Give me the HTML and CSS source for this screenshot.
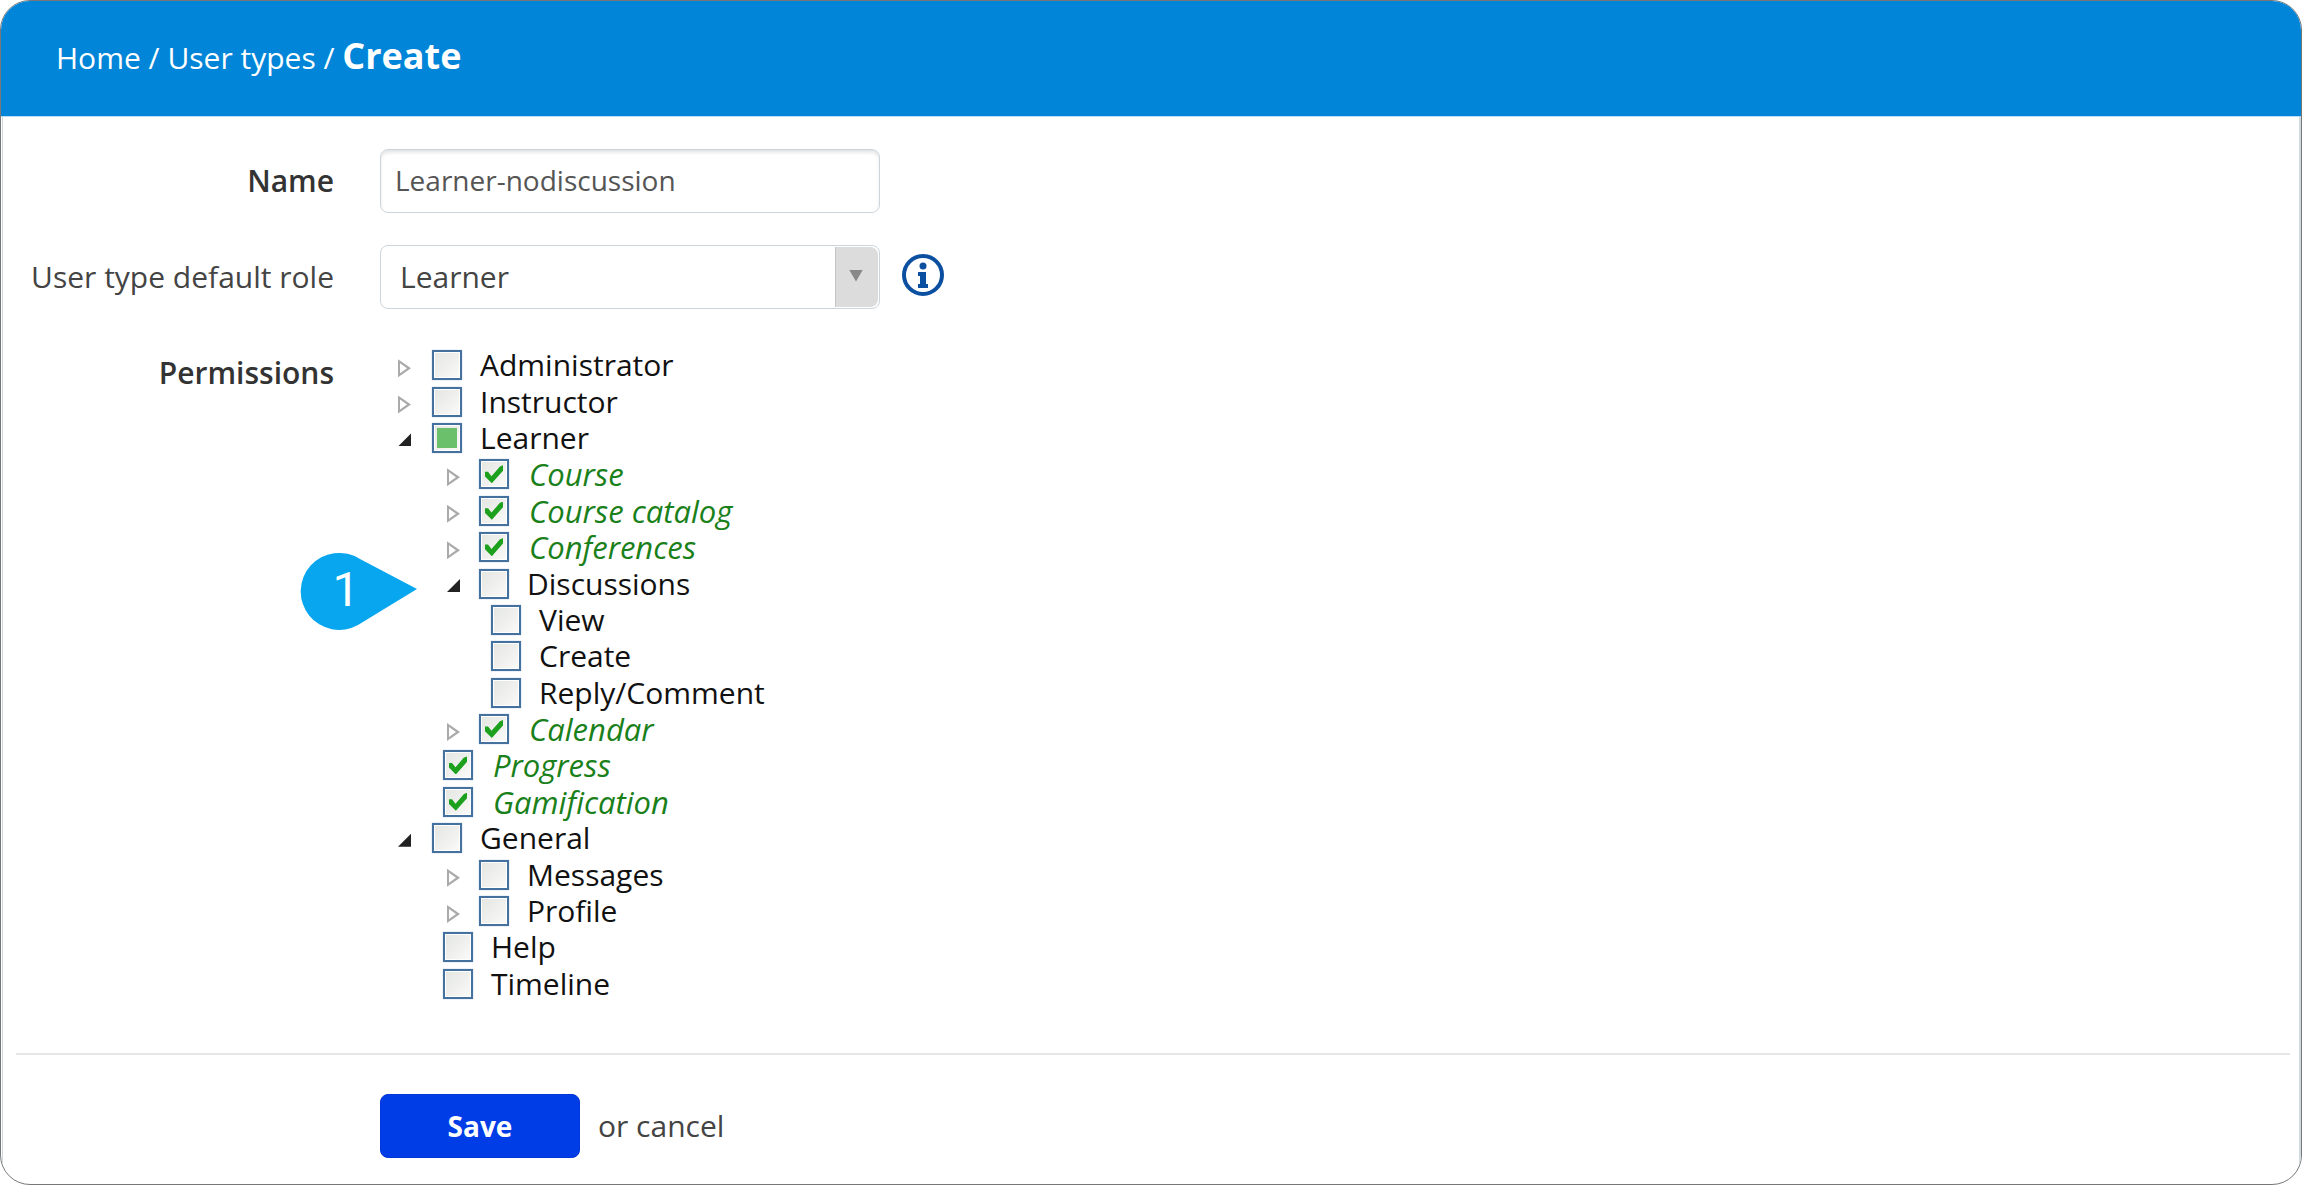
FILE: index.html
```html
<!DOCTYPE html>
<html lang="en">
<head>
<meta charset="utf-8">
<meta name="viewport" content="width=device-width, initial-scale=1">
<title>Create user type</title>
<link rel="stylesheet" href="styles.css">
</head>
<body>
<div class="window">
  <header class="topbar">
    <nav class="breadcrumb" aria-label="Breadcrumb">
      <a href="#">Home</a> / <a href="#">User types</a> / <strong>Create</strong>
    </nav>
  </header>
  <form class="form">
    <div class="fields">
      <label class="label label-strong" for="name">Name</label>
      <div class="control"><input class="box text-input" id="name" type="text" value="Learner-nodiscussion"></div>

      <label class="label" for="role">User type default role</label>
      <div class="control">
        <div class="box select-box">
          <select class="select" id="role"><option>Learner</option></select>
          <span class="select-arrow"></span>
        </div>
        <button class="info" type="button" aria-label="Information">
          <svg viewBox="0 0 44 44" width="44" height="44" fill="#0b4fa0">
            <circle cx="22" cy="22" r="19" fill="none" stroke="#0b4fa0" stroke-width="4"/>
            <circle cx="22" cy="13" r="3.500"/>
            <path d="M17 19h8v12h2v4H17v-4h2v-8h-2z"/>
          </svg>
        </button>
      </div>

      <span class="label label-strong" id="perm">Permissions</span>
      <ul class="tree" aria-labelledby="perm">
        <li class="row"><button class="toggle" type="button" aria-label="Expand"></button><label class="item"><input class="check" type="checkbox">Administrator</label></li>
        <li class="row"><button class="toggle" type="button" aria-label="Expand"></button><label class="item"><input class="check" type="checkbox">Instructor</label></li>
        <li class="row"><button class="toggle open" type="button" aria-label="Collapse"></button><label class="item"><input class="check partial" type="checkbox">Learner</label></li>
        <li class="row child"><button class="toggle" type="button" aria-label="Expand"></button><label class="item on"><input class="check" type="checkbox" checked>Course</label></li>
        <li class="row child"><button class="toggle" type="button" aria-label="Expand"></button><label class="item on"><input class="check" type="checkbox" checked>Course catalog</label></li>
        <li class="row child"><button class="toggle" type="button" aria-label="Expand"></button><label class="item on"><input class="check" type="checkbox" checked>Conferences</label></li>
        <li class="row child">
          <span class="marker">
            <svg class="marker-shape" viewBox="0 0 118 78" width="118" height="78"><path d="M117 37 60 7A38.500 38.500 0 1 0 58 73Z" fill="#08a6ee"/></svg>
            <span class="marker-number">1</span>
          </span>
          <button class="toggle open" type="button" aria-label="Collapse"></button><label class="item"><input class="check" type="checkbox">Discussions</label></li>
        <li class="row grandleaf"><label class="item"><input class="check" type="checkbox">View</label></li>
        <li class="row grandleaf"><label class="item"><input class="check" type="checkbox">Create</label></li>
        <li class="row grandleaf"><label class="item"><input class="check" type="checkbox">Reply/Comment</label></li>
        <li class="row child"><button class="toggle" type="button" aria-label="Expand"></button><label class="item on"><input class="check" type="checkbox" checked>Calendar</label></li>
        <li class="row leaf"><label class="item on"><input class="check" type="checkbox" checked>Progress</label></li>
        <li class="row leaf"><label class="item on"><input class="check" type="checkbox" checked>Gamification</label></li>
        <li class="row"><button class="toggle open" type="button" aria-label="Collapse"></button><label class="item"><input class="check" type="checkbox">General</label></li>
        <li class="row child"><button class="toggle" type="button" aria-label="Expand"></button><label class="item"><input class="check" type="checkbox">Messages</label></li>
        <li class="row child"><button class="toggle" type="button" aria-label="Expand"></button><label class="item"><input class="check" type="checkbox">Profile</label></li>
        <li class="row leaf"><label class="item"><input class="check" type="checkbox">Help</label></li>
        <li class="row leaf"><label class="item"><input class="check" type="checkbox">Timeline</label></li>
      </ul>
    </div>
    <div class="actions">
      <button class="save" type="submit">Save</button>
      <span>or <a class="cancel" href="#">cancel</a></span>
    </div>
  </form>
</div>
</body>
</html>
```

FILE: styles.css
```css
* { box-sizing: border-box; }

body {
  margin: 0;
  background: #fff;
  color: #444;
  font: 30px/36px "Open Sans", "Noto Sans", sans-serif;
}

a { color: inherit; text-decoration: none; }

button, input, select { font: inherit; color: inherit; }

.window {
  display: flex;
  flex-direction: column;
  min-height: 100vh;
  border: 1px solid #777;
  border-radius: 30px;
  overflow: hidden;
}

.topbar {
  display: flex;
  align-items: center;
  height: 116px;
  padding: 0 55px 4px;
  border-bottom: 1px solid #b5dcf5;
  background: #0085d8;
  color: #fff;
}

.breadcrumb { line-height: 48px; }
.breadcrumb strong { font-size: 36px; }

.form {
  flex: 1;
  padding: 32px 9px 22px 13px;
  border: solid #cfdae1;
  border-width: 0 2px 0 1px;
  margin-left: 1px;
}

.fields {
  display: grid;
  grid-template-columns: 318px 1fr;
  gap: 32px 46px;
  padding-bottom: 51px;
  border-bottom: 2px solid #e6e6e6;
}

.label { align-self: start; padding-top: 14px; text-align: right; white-space: nowrap; }
.label-strong { color: #333; font-weight: 600; }

.control { display: flex; align-items: center; gap: 21px; }

.box {
  width: 500px;
  height: 64px;
  border: 1px solid #cbd6dc;
  border-radius: 8px;
  background: #fff;
}

.text-input {
  padding: 0 14px 2px;
  color: #555;
  font-size: 28px;
  box-shadow: inset 0 3px 4px -1px #ddd;
}

.select-box { display: flex; position: relative; padding: 1px; }

.select {
  flex: 1;
  padding: 0 18px;
  border: 0;
  border-radius: 8px;
  background: transparent;
  appearance: none;
}

.select-arrow {
  display: flex;
  width: 43px;
  padding: 0 2px 3px 0;
  border-left: 1px solid #c4c4c4;
  border-radius: 0 8px 8px 0;
  background: #dcdcdc;
  pointer-events: none;
}

.select-arrow::before {
  content: "";
  width: 14px;
  height: 12px;
  margin: auto;
  background: #888;
  clip-path: polygon(0 0, 100% 0, 50% 100%);
}

.info { display: flex; padding: 0 0 4px; border: 0; background: none; }

.tree {
  display: grid;
  grid-auto-rows: 1fr;
  min-height: 655px;
  margin: 6px 0 0;
  padding: 0;
  list-style: none;
  color: #111;
}

.row { display: flex; align-items: center; position: relative; padding-left: 18px; }
.child { padding-left: 67px; }
.leaf { padding-left: 63px; }
.grandleaf { padding-left: 111px; }

.toggle {
  width: 34px;
  height: 20px;
  padding: 0;
  border: 0;
  background: none;
}

.toggle::before {
  content: "";
  display: block;
  width: 13px;
  height: 18px;
  margin-top: 4px;
  background: #aaa;
  clip-path: polygon(0 0, 100% 50%, 0 100%, 0 0, 2px 4px, 2px 14px, 9px 9px, 2px 4px);
}

.open::before {
  height: 13px;
  background: #222;
  clip-path: polygon(100% 0, 100% 100%, 0 100%);
}

.child .toggle { width: 32px; }

.item { display: flex; align-items: center; gap: 18px; white-space: nowrap; }

.item.on {
  gap: 20px;
  color: #1a801a;
  font-size: 31px;
  font-style: italic;
}

.check {
  display: grid;
  place-items: center;
  width: 30px;
  height: 30px;
  margin: 0;
  border: 2px solid #45719f;
  outline: 1px solid #fff;
  outline-offset: -3px;
  background: linear-gradient(135deg, #e4e6e1, #fafafa);
  box-shadow: 0 0 1px #8fb0d0;
  appearance: none;
}

.check:checked::before {
  content: "";
  width: 18px;
  height: 18px;
  background: #1da01d;
  clip-path: polygon(0 36%, 17% 36%, 36% 60%, 83% 6%, 100% 0, 100% 30%, 38% 100%, 0 62%);
}

.partial::before {
  content: "";
  width: 20px;
  height: 20px;
  background: #6bc06b;
}

.marker { position: absolute; top: -13px; left: -80px; width: 118px; height: 78px; color: #fff; }
.marker-shape { display: block; }

.marker-number {
  position: absolute;
  inset: 0 26px 0 0;
  text-align: center;
  font: 48px/76px Roboto, sans-serif;
}

.actions { display: flex; align-items: center; gap: 18px; padding: 39px 0 0 364px; }

.save {
  width: 200px;
  height: 64px;
  border: 1px solid #0037d8;
  border-radius: 8px;
  background: #003de6;
  color: #fff;
  font-size: 28px;
  font-weight: 700;
}
```
